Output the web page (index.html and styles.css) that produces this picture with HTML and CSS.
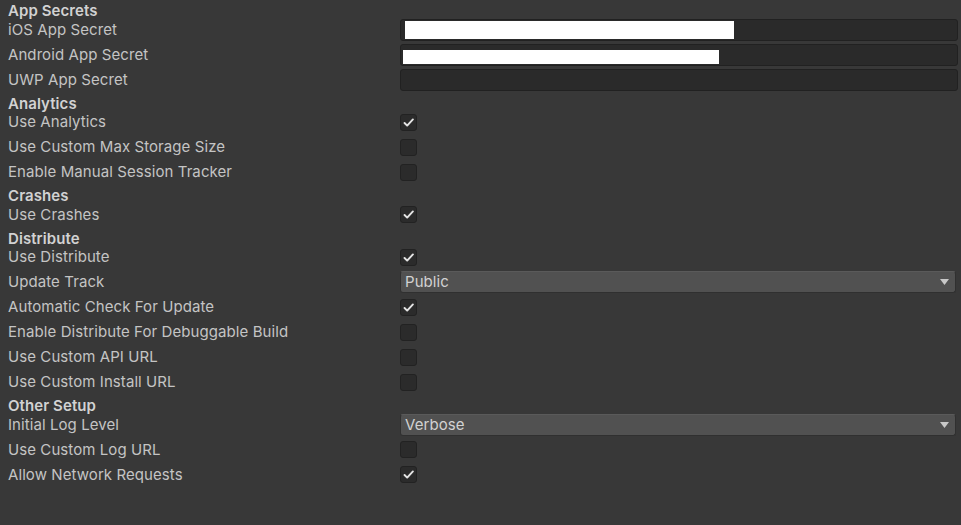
FILE: index.html
```html
<!DOCTYPE html>
<html>
<head>
<meta charset="utf-8">
<link rel="stylesheet" href="styles.css">
</head>
<body>
<div class="inspector">
  <div class="header">App Secrets</div>
  <div class="row"><div class="label">iOS App Secret</div><div class="field"><div class="redact redact-ios"></div></div></div>
  <div class="row"><div class="label">Android App Secret</div><div class="field"><div class="redact redact-android"></div></div></div>
  <div class="row"><div class="label">UWP App Secret</div><div class="field"></div></div>

  <div class="header">Analytics</div>
  <div class="row"><div class="label">Use Analytics</div><div class="check on"><svg viewBox="0 0 17 17"><path d="M4 9 L7 12 L13.5 5"/></svg></div></div>
  <div class="row"><div class="label">Use Custom Max Storage Size</div><div class="check"></div></div>
  <div class="row"><div class="label">Enable Manual Session Tracker</div><div class="check"></div></div>

  <div class="header">Crashes</div>
  <div class="row"><div class="label">Use Crashes</div><div class="check on"><svg viewBox="0 0 17 17"><path d="M4 9 L7 12 L13.5 5"/></svg></div></div>

  <div class="header">Distribute</div>
  <div class="row"><div class="label">Use Distribute</div><div class="check on"><svg viewBox="0 0 17 17"><path d="M4 9 L7 12 L13.5 5"/></svg></div></div>
  <div class="row"><div class="label">Update Track</div><div class="dropdown"><span>Public</span><svg class="arrow" viewBox="0 0 9 6"><path d="M0 0 H9 L4.5 6 Z"/></svg></div></div>
  <div class="row"><div class="label">Automatic Check For Update</div><div class="check on"><svg viewBox="0 0 17 17"><path d="M4 9 L7 12 L13.5 5"/></svg></div></div>
  <div class="row"><div class="label">Enable Distribute For Debuggable Build</div><div class="check"></div></div>
  <div class="row"><div class="label">Use Custom API URL</div><div class="check"></div></div>
  <div class="row"><div class="label">Use Custom Install URL</div><div class="check"></div></div>

  <div class="header">Other Setup</div>
  <div class="row"><div class="label">Initial Log Level</div><div class="dropdown"><span>Verbose</span><svg class="arrow" viewBox="0 0 9 6"><path d="M0 0 H9 L4.5 6 Z"/></svg></div></div>
  <div class="row"><div class="label">Use Custom Log URL</div><div class="check"></div></div>
  <div class="row"><div class="label">Allow Network Requests</div><div class="check on"><svg viewBox="0 0 17 17"><path d="M4 9 L7 12 L13.5 5"/></svg></div></div>
</div>
</body>
</html>
```

FILE: styles.css
```css
html, body {
  margin: 0;
  padding: 0;
  background: #383838;
  height: 100%;
}
body {
  font-family: Inter, "Noto Sans", sans-serif;
  font-size: 15px;
  letter-spacing: 0.08px;
  color: #c4c4c4;
}
.inspector {
  padding: 1px 0 0 8px;
  display: flex;
  flex-direction: column;
}
.header {
  height: 17.5px;
  line-height: 20px;
  font-weight: 600;
  color: #d2d2d2;
  white-space: nowrap;
}
.row {
  height: 22px;
  margin-bottom: 3px;
  display: flex;
  align-items: center;
}
.label {
  width: 392px;
  flex: none;
  white-space: nowrap;
  line-height: 22px;
}
.field {
  flex: 1;
  height: 22px;
  box-sizing: border-box;
  margin-right: 3px;
  background: #2a2a2a;
  border: 1px solid #212121;
  border-radius: 3px;
}
.redact {
  background: #ffffff;
}
.redact-ios {
  width: 329px;
  height: 18px;
  margin: 1px 0 0 4px;
}
.redact-android {
  width: 316px;
  height: 14px;
  margin: 5px 0 0 2px;
}
.check {
  width: 17px;
  height: 17px;
  box-sizing: border-box;
  background: #2b2b2b;
  border: 1px solid #222222;
  border-radius: 3px;
  display: flex;
}
.check svg {
  width: 15px;
  height: 15px;
}
.check svg path {
  fill: none;
  stroke: #e4e4e4;
  stroke-width: 2.2;
  stroke-linecap: round;
  stroke-linejoin: round;
}
.dropdown {
  flex: 1;
  height: 22px;
  box-sizing: border-box;
  margin-right: 5px;
  background: #515151;
  border: 1px solid #303030;
  border-top-color: #5a5a5a;
  border-radius: 3px;
  display: flex;
  align-items: center;
  justify-content: space-between;
  padding: 0 6px 0 4px;
  color: #d2d2d2;
}
.dropdown span {
  margin-top: -1px;
}
.dropdown .arrow {
  width: 9px;
  height: 6px;
}
.dropdown .arrow path {
  fill: #c8c8c8;
}
```
